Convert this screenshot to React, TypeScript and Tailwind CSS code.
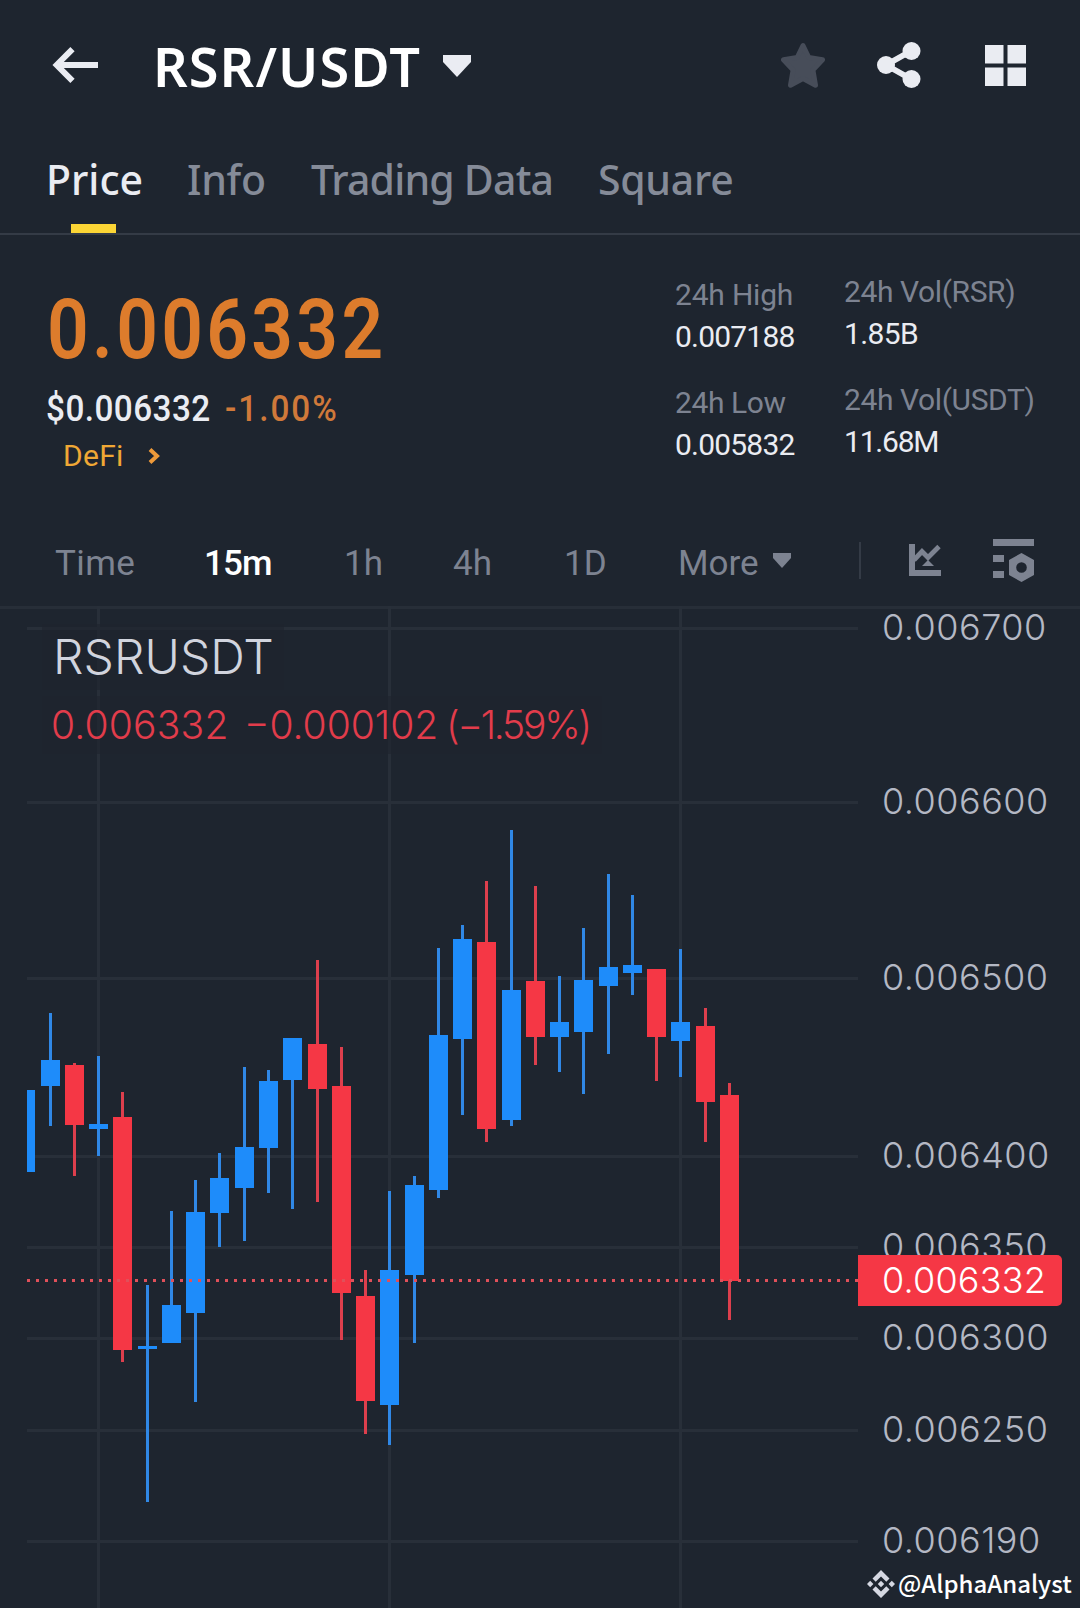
const BLUE = "#1e8cfa";
const RED = "#f53745";
const BLUE_WICK = "#3088e6";
const RED_WICK = "#dd3f4d";

// [x of wick, wick top, wick bottom, body top, body bottom, rising]
type Candle = [number, number, number, number, number, boolean];

const candles: Candle[] = [
  [49, 1013, 1126, 1060, 1086, true],
  [73, 1063, 1176, 1065, 1125, false],
  [97, 1056, 1156, 1124, 1129, true],
  [121, 1092, 1362, 1117, 1350, false],
  [146, 1285, 1502, 1346, 1349, true],
  [170, 1211, 1343, 1305, 1343, true],
  [194, 1180, 1402, 1212, 1313, true],
  [218, 1153, 1247, 1178, 1213, true],
  [243, 1067, 1241, 1147, 1188, true],
  [267, 1070, 1193, 1081, 1148, true],
  [291, 1038, 1209, 1038, 1080, true],
  [316, 960, 1202, 1044, 1089, false],
  [340, 1047, 1340, 1086, 1293, false],
  [364, 1270, 1434, 1296, 1401, false],
  [388, 1191, 1445, 1270, 1405, true],
  [413, 1176, 1343, 1185, 1275, true],
  [437, 948, 1198, 1035, 1190, true],
  [461, 925, 1115, 939, 1039, true],
  [485, 881, 1142, 942, 1129, false],
  [510, 830, 1126, 990, 1120, true],
  [534, 886, 1065, 981, 1037, false],
  [558, 976, 1072, 1022, 1037, true],
  [582, 928, 1094, 980, 1032, true],
  [607, 874, 1054, 967, 986, true],
  [631, 895, 995, 965, 973, true],
  [655, 969, 1081, 969, 1037, false],
  [679, 949, 1077, 1022, 1041, true],
  [704, 1008, 1142, 1026, 1102, false],
  [728, 1083, 1320, 1095, 1281, false],
];

const axis: [string, number][] = [
  ["0.006700", 628],
  ["0.006600", 802],
  ["0.006500", 978],
  ["0.006400", 1156],
  ["0.006350", 1247],
  ["0.006300", 1338],
  ["0.006250", 1430],
  ["0.006190", 1541],
];

const verticals = [98.5, 389.5, 680.5];

function Stat({ label, value, labelClass, valueClass }: { label: string; value: string; labelClass: string; valueClass: string }) {
  return (
    <div className="whitespace-nowrap text-[30px] leading-[42px]">
      <div className={`text-[#7d8391] ${labelClass}`}>{label}</div>
      <div className={`text-[#eaecf2] ${valueClass}`}>{value}</div>
    </div>
  );
}

function Header() {
  return (
    <header className="flex h-[130px] items-center text-[#eaecf2]">
      <svg className="ml-[52px] h-[36px] w-[46px]" viewBox="0 0 46 36" fill="none" stroke="currentColor" strokeWidth="6">
        <path d="M46 18H6M20.5 2.2 4.7 18l15.800 15.800" />
      </svg>
      <h1 className="ml-[55px] mt-[2px] w-[290px] whitespace-nowrap font-['Noto_Sans',sans-serif] text-[54px] font-semibold leading-[60px] tracking-[1.100px] text-white">
        RSR/USDT
      </h1>
      <svg className="mt-[2px] h-[22px] w-[28px]" viewBox="0 0 28 22" fill="currentColor">
        <path d="M0 0h28v7L14 22 0 7z" />
      </svg>
      <svg className="ml-[310px] h-[46px] w-[44px] text-[#474d59]" viewBox="0 0 44 46" fill="currentColor" stroke="currentColor" strokeWidth="5" strokeLinejoin="round">
        <path d="m22 3.500 5.800 12 13.700 2.300-9.600 10.200 2.600 15.200L22 36.500 9.500 43.200l2.600-15.200L2.500 17.800l13.700-2.300z" />
      </svg>
      <svg className="ml-[52px] h-[48px] w-[44px]" viewBox="0 0 44 48" fill="currentColor">
        <path d="M9 24 34 10M9 24l25 14" stroke="currentColor" strokeWidth="6" />
        <circle cx="9" cy="24" r="9" />
        <circle cx="34.500" cy="10" r="9" />
        <circle cx="34.500" cy="38" r="9" />
      </svg>
      <svg className="ml-[64px] h-[41px] w-[41px]" viewBox="0 0 41 41" fill="currentColor">
        <path d="M0 0h18.500v18.500H0zM22.500 0H41v18.500H22.500zM0 22.500h18.500V41H0zM22.500 22.500H41V41H22.500z" />
      </svg>
    </header>
  );
}

function Tabs() {
  return (
    <nav className="flex h-[105px] whitespace-nowrap border-b-2 border-[#343b46] font-['Noto_Sans',sans-serif] text-[41px] font-medium leading-[98px] text-[#858b98]">
      <div className="relative ml-[46px] w-[141px] text-[#eaecf2]">
        Price
        <span className="absolute left-[25px] top-[94px] h-[9px] w-[45px] bg-[#fbd535]" />
      </div>
      <div className="w-[124px] tracking-[-0.3px]">Info</div>
      <div className="w-[287px] tracking-[-0.8px]">Trading Data</div>
      <div className="tracking-[-0.300px]">Square</div>
    </nav>
  );
}

function Summary() {
  return (
    <section className="flex h-[280px]">
      <div className="w-[675px] pt-[52px]">
        <div className="ml-[47px] flex">
          <span className="origin-left scale-x-[0.87] text-[84px] font-semibold leading-[85px] tracking-[3.800px] text-[#dd7c2c]">0.006332</span>
        </div>
        <div className="flex pl-[46px] text-[37px] font-medium leading-[74px]">
          <span className="w-[179px] origin-left scale-x-[0.9] tracking-[0.500px] text-[#eaecf2]">$0.006332</span>
          <span className="origin-left scale-x-[0.9] tracking-[2.200px] text-[#d0793a]">-1.00%</span>
        </div>
        <div className="-mt-[2px] flex items-center pl-[63px] text-[30px] leading-[24px] text-[#f0a835]">
          <span className="w-[85px] tracking-[0.300px]">DeFi</span>
          <svg className="h-[16px] w-[12px] text-[#ee9a3a]" viewBox="0 0 12 16" fill="none" stroke="currentColor" strokeWidth="4">
            <path d="m2 1.500 7 6.500-7 6.500" />
          </svg>
        </div>
      </div>
      <div className="flex w-[169px] flex-col gap-[24px] pt-[39px]">
        <Stat label="24h High" value="0.007188" labelClass="tracking-[-0.200px]" valueClass="tracking-[-0.800px]" />
        <Stat label="24h Low" value="0.005832" labelClass="tracking-[-0.400px]" valueClass="tracking-[-0.800px]" />
      </div>
      <div className="flex flex-col gap-[24px] pt-[36px]">
        <Stat label="24h Vol(RSR)" value="1.85B" labelClass="tracking-[-0.400px]" valueClass="tracking-[-0.600px]" />
        <Stat label="24h Vol(USDT)" value="11.68M" labelClass="tracking-[-0.400px]" valueClass="tracking-[-1.200px]" />
      </div>
    </section>
  );
}

function Intervals() {
  return (
    <div className="flex h-[91px] items-center pl-[55px] pt-[7px] text-[35px] leading-[40px] text-[#7d8391]">
      <span className="w-[149px] tracking-[0.400px]">Time</span>
      <span className="w-[140px] font-medium tracking-[-0.900px] text-white">15m</span>
      <span className="w-[109px]">1h</span>
      <span className="w-[111px]">4h</span>
      <span className="w-[114px]">1D</span>
      <span className="w-[95px]">More</span>
      <svg className="mb-[7px] h-[15px] w-[18px]" viewBox="0 0 18 15" fill="currentColor">
        <path d="M0 0h18v5L9 15 0 5z" />
      </svg>
      <span className="mb-[8px] ml-[68px] h-[37px] w-[2px] bg-[#343b46]" />
      <svg className="mb-[8px] ml-[48px] h-[32px] w-[32px]" viewBox="0 0 32 32" fill="currentColor">
        <path d="M0 0h6v26h26v6H0z" />
        <path d="m5 16 8-8.500 6 6L30 2.500" fill="none" stroke="currentColor" strokeWidth="4.800" />
        <path d="m19 16 6 6H13z" />
      </svg>
      <svg className="mb-[8px] ml-[52px] h-[43px] w-[41px]" viewBox="0 0 41 43" fill="currentColor">
        <path d="M0 0h41v7H0zM0 16h11v7H0zM0 32h11v7H0z" />
        <path fillRule="evenodd" d="m28.500 14 12.500 7v15l-12.500 7L16 36V21zM28.500 23.200a5.300 5.300 0 1 0 0 10.600a5.300 5.300 0 1 0 0-10.600z" />
      </svg>
    </div>
  );
}

function Chart() {
  return (
    <section className="relative h-[1002px]">
      <svg className="block h-[1002px] w-[1080px]" viewBox="0 606 1080 1002" shapeRendering="crispEdges">
        <rect x="0" y="606" width="1080" height="3" fill="#272e38" />
        {verticals.map((x) => (
          <rect key={x} x={x - 1.5} y="606" width="3" height="1002" fill="#282f39" />
        ))}
        {axis.map(([label, y]) => (
          <rect key={label} x="27" y={y - 1} width="831" height="3" fill="#282f39" />
        ))}
        <rect x="27" y="1090" width="8" height="82" fill={BLUE} />
        {candles.map(([x, top, bottom, open, close, up]) => (
          <g key={x}>
            <rect x={x} y={top} width="3" height={bottom - top} fill={up ? BLUE_WICK : RED_WICK} />
            <rect x={x - 8} y={open} width="19" height={close - open} fill={up ? BLUE : RED} />
          </g>
        ))}
        <path d="M27 1280.500H858" stroke="#e0505a" strokeWidth="3" strokeDasharray="3 6" />
        <g fontFamily="Inter, sans-serif" fontSize="36" fontWeight="300" letterSpacing="0.500" fill="#b4b8c4" shapeRendering="auto">
          {axis.map(([label, y]) => (
            <text key={label} x="882" y={y + 12}>
              {label}
            </text>
          ))}
          <path d="M858 1255h199a5 5 0 0 1 5 5v41a5 5 0 0 1-5 5H858z" fill="#f53745" />
          <text x="882" y="1293" letterSpacing="0.200" fill="#ffffff">
            0.006332
          </text>
        </g>
      </svg>
      <div className="absolute left-[42px] top-[18px] font-['Inter',sans-serif] font-light">
        <div className="h-[66px] w-[242px] bg-[#1e252f]/60 pl-[11px] text-[48px] leading-[66px] tracking-[0.100px] text-[#d1d4de]">RSRUSDT</div>
        <div className="mt-[6px] flex h-[58px] w-[560px] whitespace-nowrap bg-[#1e252f]/60 pl-[9px] text-[39px] leading-[57px] text-[#e23c4b]">
          <span className="w-[193px] tracking-[0.200px]">0.006332</span>
          <span className="w-[202px]">−0.000102</span>
          <span className="tracking-[-2.200px]">(−1.59%)</span>
        </div>
      </div>
      <div className="absolute left-[867px] top-[960px] flex h-[36px] items-center gap-[3px] font-['Noto_Sans_CJK_SC',sans-serif] text-[24px] font-medium leading-[36px] text-white">
        <svg className="h-[28px] w-[28px] text-[#d5d8e2]" viewBox="0 0 28 28" fill="currentColor">
          <path d="m14 0 8.500 8.500-3.200 3.200L14 6.400l-5.300 5.300-3.200-3.200zM14 28l8.500-8.500-3.200-3.200-5.300 5.300-5.300-5.300-3.200 3.200zM3.200 10.800 6.400 14l-3.200 3.200L0 14zM24.800 10.800 28 14l-3.200 3.200-3.200-3.200zM14 10.800l3.200 3.200-3.200 3.200-3.200-3.200z" />
        </svg>
        <span className="-mt-[2px]">@AlphaAnalyst</span>
      </div>
    </section>
  );
}

export default function App() {
  return (
    <main className="h-[1608px] w-[1080px] overflow-hidden bg-[#1e252f] font-['Roboto',sans-serif]">
      <Header />
      <Tabs />
      <Summary />
      <Intervals />
      <Chart />
    </main>
  );
}
